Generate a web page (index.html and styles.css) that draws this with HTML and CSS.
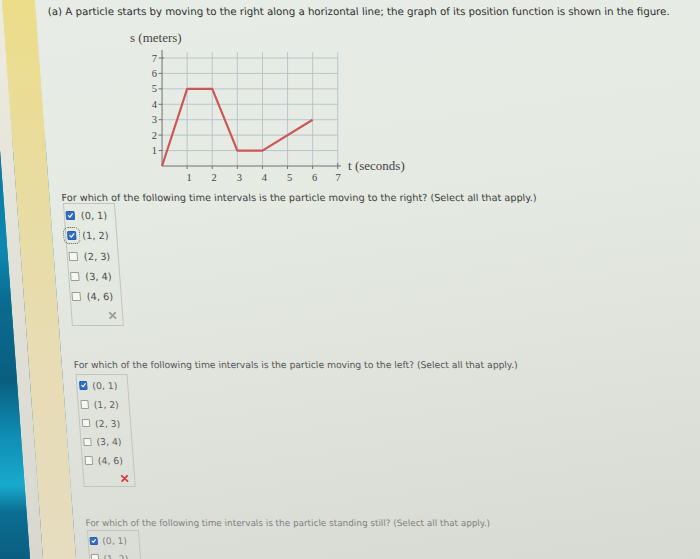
FILE: index.html
```html
<!DOCTYPE html>
<html lang="en">
<head>
<meta charset="utf-8">
<title>Particle motion</title>
<link rel="stylesheet" href="styles.css">
</head>
<body>
<div class="screen">
  <div class="bezel"></div>
  <div class="band"></div>
  <main class="page">
    <p class="intro">(a) A particle starts by moving to the right along a horizontal line; the graph of its position function is shown in the figure.</p>

    <svg class="graph" width="320" height="158" viewBox="0 0 320 158" xmlns="http://www.w3.org/2000/svg">
      <g class="grid">
        <line x1="85.1" y1="24" x2="85.1" y2="138"/>
        <line x1="110.2" y1="24" x2="110.2" y2="138"/>
        <line x1="135.3" y1="24" x2="135.3" y2="138"/>
        <line x1="160.4" y1="24" x2="160.4" y2="138"/>
        <line x1="185.5" y1="24" x2="185.5" y2="138"/>
        <line x1="210.6" y1="24" x2="210.6" y2="138"/>
        <line x1="235.7" y1="24" x2="235.7" y2="138"/>
        <line x1="60" y1="122.57" x2="235.7" y2="122.57"/>
        <line x1="60" y1="107.14" x2="235.7" y2="107.14"/>
        <line x1="60" y1="91.71" x2="235.7" y2="91.71"/>
        <line x1="60" y1="76.28" x2="235.7" y2="76.28"/>
        <line x1="60" y1="60.85" x2="235.7" y2="60.85"/>
        <line x1="60" y1="45.42" x2="235.7" y2="45.42"/>
        <line x1="60" y1="30" x2="235.7" y2="30"/>
      </g>
      <g class="axis">
        <line x1="60" y1="22" x2="60" y2="138"/>
        <line x1="60" y1="138" x2="239" y2="138"/>
        <line x1="56.5" y1="122.57" x2="60" y2="122.57"/>
        <line x1="56.5" y1="107.14" x2="60" y2="107.14"/>
        <line x1="56.5" y1="91.71" x2="60" y2="91.71"/>
        <line x1="56.5" y1="76.28" x2="60" y2="76.28"/>
        <line x1="56.5" y1="60.85" x2="60" y2="60.85"/>
        <line x1="56.5" y1="45.42" x2="60" y2="45.42"/>
        <line x1="56.5" y1="30" x2="62" y2="30"/>
        <line x1="85.1" y1="138" x2="85.1" y2="141"/>
        <line x1="110.2" y1="138" x2="110.2" y2="141"/>
        <line x1="135.3" y1="138" x2="135.3" y2="141"/>
        <line x1="160.4" y1="138" x2="160.4" y2="141"/>
        <line x1="185.5" y1="138" x2="185.5" y2="141"/>
        <line x1="210.6" y1="138" x2="210.6" y2="141"/>
        <line x1="235.7" y1="135" x2="235.7" y2="141"/>
      </g>
      <polyline class="curve" points="60,138 85.1,60.85 110.2,60.85 135.3,122.57 160.4,122.57 210.6,91.71"/>
      <g class="ticks-y">
        <text x="55" y="126.2">1</text>
        <text x="55" y="110.7">2</text>
        <text x="55" y="95.3">3</text>
        <text x="55" y="79.9">4</text>
        <text x="55" y="64.4">5</text>
        <text x="55" y="49">6</text>
        <text x="55" y="33.6">7</text>
      </g>
      <g class="ticks-x">
        <text x="87.1" y="152.5">1</text>
        <text x="112.2" y="152.5">2</text>
        <text x="137.3" y="152.5">3</text>
        <text x="162.4" y="152.5">4</text>
        <text x="187.5" y="152.5">5</text>
        <text x="212.6" y="152.5">6</text>
        <text x="236.2" y="152.5">7</text>
      </g>
      <text class="axis-title" x="28" y="14">s (meters)</text>
      <text class="axis-title" x="246" y="142">t (seconds)</text>
    </svg>

    <section class="q q1">
      <p class="prompt">For which of the following time intervals is the particle moving to the right? (Select all that apply.)</p>
      <div class="answers">
        <div class="opt"><span class="cb on"><svg viewBox="0 0 10 10"><path d="M2.2 5.2 L4.2 7.2 L8 2.6"/></svg></span><span class="lbl">(0, 1)</span></div>
        <div class="opt"><span class="cb on focus"><svg viewBox="0 0 10 10"><path d="M2.2 5.2 L4.2 7.2 L8 2.6"/></svg></span><span class="lbl">(1, 2)</span></div>
        <div class="opt"><span class="cb"></span><span class="lbl">(2, 3)</span></div>
        <div class="opt"><span class="cb"></span><span class="lbl">(3, 4)</span></div>
        <div class="opt"><span class="cb"></span><span class="lbl">(4, 6)</span></div>
        <div class="mark grey"><svg viewBox="0 0 10 10"><path d="M2 2 L8 8 M8 2 L2 8"/></svg></div>
      </div>
    </section>

    <section class="q q2">
      <p class="prompt">For which of the following time intervals is the particle moving to the left? (Select all that apply.)</p>
      <div class="answers">
        <div class="opt"><span class="cb on"><svg viewBox="0 0 10 10"><path d="M2.2 5.2 L4.2 7.2 L8 2.6"/></svg></span><span class="lbl">(0, 1)</span></div>
        <div class="opt"><span class="cb"></span><span class="lbl">(1, 2)</span></div>
        <div class="opt"><span class="cb"></span><span class="lbl">(2, 3)</span></div>
        <div class="opt"><span class="cb"></span><span class="lbl">(3, 4)</span></div>
        <div class="opt"><span class="cb"></span><span class="lbl">(4, 6)</span></div>
        <div class="mark red"><svg viewBox="0 0 10 10"><path d="M2 2 L8 8 M8 2 L2 8"/></svg></div>
      </div>
    </section>

    <section class="q q3">
      <p class="prompt">For which of the following time intervals is the particle standing still? (Select all that apply.)</p>
      <div class="answers">
        <div class="opt"><span class="cb on"><svg viewBox="0 0 10 10"><path d="M2.2 5.2 L4.2 7.2 L8 2.6"/></svg></span><span class="lbl">(0, 1)</span></div>
        <div class="opt"><span class="cb"></span><span class="lbl">(1, 2)</span></div>
      </div>
    </section>
  </main>
</div>
</body>
</html>
```

FILE: styles.css
```css
html, body {
  margin: 0;
  padding: 0;
  height: 559px;
  overflow: hidden;
}

body {
  font-family: "DejaVu Sans", Verdana, sans-serif;
  background: linear-gradient(180deg,
    #dcdcd4 0px, #dcdcd4 135px,
    #0b78a0 150px, #0d88b0 250px, #0a6c90 300px,
    #0a5e80 380px, #1090b6 440px, #18aacd 485px,
    #0b6e92 512px, #0a5e80 559px);
}

.screen {
  display: flex;
  width: 716px;
  height: 559px;
  margin-left: -11px;
  overflow: hidden;
  transform-origin: 0 0;
  transform: skewX(4.2deg);
}

.bezel {
  width: 13px;
  flex: none;
  background: linear-gradient(180deg, #eeece0 0%, #e2e1d8 50%, #d8d8d0 100%);
}

.band {
  width: 33px;
  flex: none;
  background: linear-gradient(180deg, #ecdd8a 0%, #e9dc9e 30%, #e7dcb2 60%, #e6dcc0 100%);
}

.page {
  flex: 1;
  padding-left: 12px;
  background: linear-gradient(172deg, #e7ede6 0%, #e5eae3 35%, #dfe3dc 65%, #d7dad2 100%);
}

.intro {
  margin: 6px 0 0;
  font-size: 10.2px;
  line-height: 12px;
  color: #2e2e2e;
  white-space: nowrap;
}

.graph {
  display: block;
  margin: 10px 0 0 53px;
  transform-origin: 0 0;
  transform: skewX(-4.2deg);
}

.graph .grid line {
  stroke: #b2c2ca;
  stroke-width: 0.9;
}

.graph .axis line {
  stroke: #707070;
  stroke-width: 1;
}

.graph .curve {
  fill: none;
  stroke: #cd5656;
  stroke-width: 2.2;
  stroke-linejoin: round;
}

.graph text {
  font-family: "Liberation Serif", "Times New Roman", serif;
  fill: #444;
}

.graph .ticks-y text {
  font-size: 10.5px;
  text-anchor: end;
}

.graph .ticks-x text {
  font-size: 10.5px;
  text-anchor: middle;
}

.graph .axis-title {
  font-size: 13px;
}

.q .prompt {
  margin: 0;
  white-space: nowrap;
}

.answers {
  margin-left: 1px;
  width: 50px;
  border: 1px solid #c3c4bc;
}

.opt {
  display: flex;
  align-items: center;
  white-space: nowrap;
}

.cb {
  flex: none;
  box-sizing: border-box;
  border: 1px solid #9c9d98;
  background: #f6f6f3;
  border-radius: 1px;
  display: flex;
}

.cb svg {
  width: 100%;
  height: 100%;
}

.cb svg path {
  fill: none;
  stroke: #ffffff;
  stroke-width: 1.7;
  stroke-linecap: round;
  stroke-linejoin: round;
}

.cb.on {
  background: #2f6ec6;
  border-color: #2a5fae;
  border-radius: 1.5px;
}

.cb.focus {
  outline: 1px dotted #5a5a5a;
  outline-offset: 3px;
}

.mark {
  display: flex;
  align-items: center;
  justify-content: flex-end;
  padding-right: 5px;
}

.mark svg path {
  fill: none;
  stroke-width: 2;
  stroke-linecap: round;
}

.mark.grey svg path { stroke: #9b9b9b; }
.mark.red svg path { stroke: #e0393c; }

/* question 1 */
.q1 .prompt {
  margin-top: 5.5px;
  font-size: 9.7px;
  line-height: 11px;
  color: #3e3e3e;
}
.q1 .answers { margin-top: 0.5px; padding-top: 1.5px; }
.q1 .opt { height: 20.3px; padding-left: 1px; font-size: 9.8px; color: #4c4c4c; }
.q1 .cb { width: 9px; height: 9px; margin-right: 6px; }
.q1 .mark { height: 18px; }
.q1 .mark svg { width: 9px; height: 9px; }

/* question 2 */
.q2 .prompt {
  margin-top: 34px;
  font-size: 9.2px;
  line-height: 10px;
  color: #545454;
}
.q2 .answers { margin-top: 4.3px; padding-top: 1px; }
.q2 .opt { height: 18.75px; padding-left: 1.5px; font-size: 9.3px; color: #5e5e5e; }
.q2 .cb { width: 8.5px; height: 8.5px; margin-right: 5px; }
.q2 .mark { height: 16px; }
.q2 .mark svg { width: 9px; height: 9px; }

/* question 3 */
.q3 .prompt {
  margin-top: 32px;
  font-size: 8.85px;
  line-height: 9.5px;
  color: #808080;
}
.q3 .answers { margin-top: 1.5px; padding-top: 0.75px; }
.q3 .opt { height: 17.5px; padding-left: 0.5px; font-size: 9.2px; color: #808080; }
.q3 .cb { width: 8px; height: 8px; margin-right: 5px; }
```
